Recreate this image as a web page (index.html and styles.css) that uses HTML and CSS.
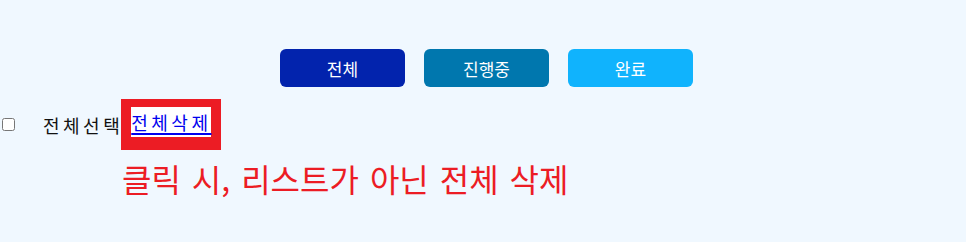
FILE: index.html
```html
<!DOCTYPE html>
<html lang="ko">
<head>
<meta charset="utf-8">
<title>Todo</title>
<link rel="stylesheet" href="styles.css">
</head>
<body>
<div class="page">
  <div class="filters">
    <button class="btn btn-all" type="button">전체</button>
    <button class="btn btn-doing" type="button">진행중</button>
    <button class="btn btn-done" type="button">완료</button>
  </div>
  <div class="select-row">
    <input class="check" type="checkbox" id="all">
    <label class="select-label" for="all">전체선택</label>
    <span class="mark"><a class="delete-link" href="#">전체삭제</a></span>
  </div>
  <p class="note">클릭 시, 리스트가 아닌 전체 삭제</p>
</div>
</body>
</html>
```
FILE: styles.css
```css
html, body {
  margin: 0;
  padding: 0;
  background: #f0f8ff;
}
body {
  font-family: "Noto Sans CJK KR", "Noto Sans", sans-serif;
  width: 966px;
  height: 242px;
  overflow: hidden;
}
.page {
  padding-top: 49px;
}
.filters {
  display: flex;
  justify-content: center;
  gap: 19px;
  padding-left: 7px;
}
.btn {
  width: 125px;
  height: 38px;
  border: none;
  border-radius: 6px;
  color: #ffffff;
  font-family: "Noto Sans CJK KR", "Noto Sans", sans-serif;
  font-size: 17px;
  font-weight: 400;
  padding: 0;
}
.btn-all { background: #0223ad; }
.btn-doing { background: #0077ae; }
.btn-done { background: #10b3fd; }

.select-row {
  display: flex;
  align-items: center;
  margin-top: 12px;
  height: 51px;
}
.check {
  width: 13px;
  height: 13px;
  margin: 0 0 0 2px;
}
.select-label {
  margin-left: 28px;
  font-size: 18px;
  letter-spacing: 3.5px;
  color: #111111;
  font-weight: 400;
  margin-right: -2px;
}
.mark {
  display: inline-flex;
  align-items: center;
  justify-content: flex-start;
  border: solid #ec1c24;
  border-width: 8px 10px 13px 10px;
  background: #ffffff;
  width: 80px;
  height: 30px;
  box-sizing: content-box;
}
.delete-link {
  color: #0000ee;
  font-size: 18px;
  line-height: 24px;
  letter-spacing: 3.5px;
  margin-left: 0;
  margin-right: -3px;
  text-decoration: underline;
  text-decoration-thickness: 2px;
  text-underline-offset: 3px;
}
.note {
  margin: 9px 0 0 122px;
  color: #ec1c24;
  font-size: 32px;
  line-height: 38px;
  letter-spacing: 0;
  word-spacing: 2px;
}
```
